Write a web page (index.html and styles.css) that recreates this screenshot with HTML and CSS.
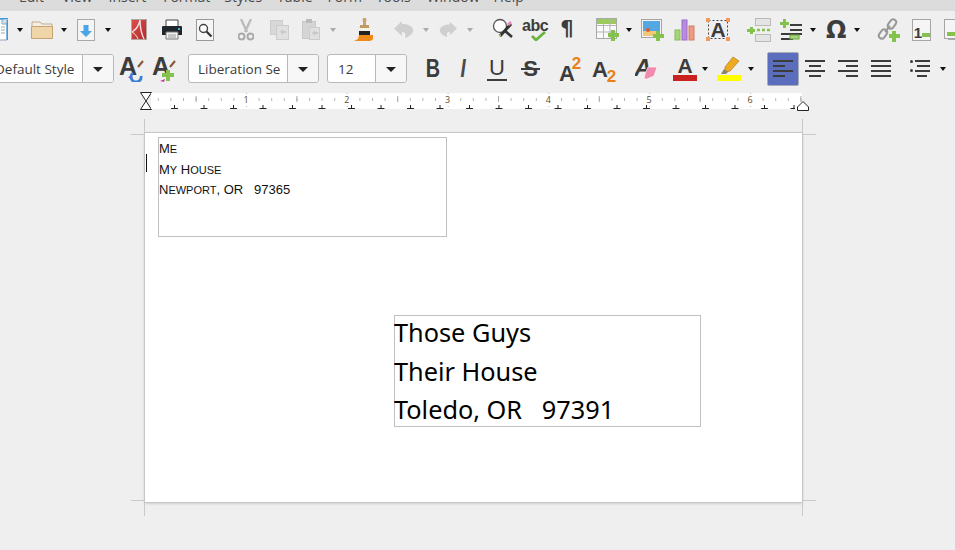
FILE: index.html
```
<!DOCTYPE html>
<html lang="en">
<head>
<meta charset="utf-8">
<title>Envelope - LibreOffice Writer</title>
<link rel="stylesheet" href="styles.css">
</head>
<body>
<div class="app">
  <nav class="menubar">
    <span class="m-edit">Edit</span><span class="m-view">View</span><span class="m-insert">Insert</span><span class="m-format">Format</span><span class="m-styles">Styles</span><span class="m-table">Table</span><span class="m-form">Form</span><span class="m-tools">Tools</span><span class="m-window">Window</span><span class="m-help">Help</span>
  </nav>

  <div class="toolbar row1">
    <svg class="first" width="20" height="23" viewBox="0 0 20 23"><path d="M1 1h13l5 5v16H1z" fill="#fff" stroke="#8fa6bd"/><path d="M14 1v5h5" fill="#d6e6f5" stroke="#8fa6bd"/><path d="M12 0h8v1.500h-8zM18.500 2h1.500v20h-1.500z" fill="#3f9bdc"/><path d="M13 9h4M13 12h4M13 15h4" stroke="#9aa" /></svg>
    <i class="caret g9"></i>
    <svg class="g8" width="22" height="20" viewBox="0 0 22 20"><path d="M1 4V2h8l2 2h10v3H1z" fill="#f3efe6" stroke="#c4ab85"/><path d="M.5 6.500h21v12H.5z" fill="#f0d5a8" stroke="#c4a374"/></svg>
    <i class="caret g8"></i>
    <svg class="g10" width="18" height="22" viewBox="0 0 18 22"><rect x=".5" y=".5" width="17" height="21" fill="#f4f4f4" stroke="#a8a8a8"/><path d="M6.500 6h5v6H15l-6 6-6-6h3.500z" fill="#4aa5e4"/></svg>
    <i class="caret g10"></i>
    <svg class="g20" width="16" height="21" viewBox="0 0 16 21"><defs><linearGradient id="pdf" x1="0" y1="0" x2="1" y2="1"><stop offset="0" stop-color="#d9534f"/><stop offset="1" stop-color="#b5282c"/></linearGradient></defs><rect width="16" height="21" fill="url(#pdf)"/><path d="M9 1c-1 5-3 9-8 12M9 1c0 6 1 13 4 19" fill="none" stroke="#f5dede" stroke-width="1.400"/><path d="M1 13c3 2 5 4 6 7" fill="none" stroke="#eec" stroke-width="1"/><rect x=".5" y=".5" width="15" height="20" fill="none" stroke="#b0a8a0"/></svg>
    <svg class="g15" width="20" height="21" viewBox="0 0 20 21"><path d="M4 1h12v7H4z" fill="#fff" stroke="#444"/><path d="M1 7h18a1 1 0 0 1 1 1v8H0V8a1 1 0 0 1 1-1z" fill="#22272b"/><path d="M4 13h12v7H4z" fill="#f4f4f4" stroke="#777"/><rect x="16" y="9" width="2" height="2" fill="#35b6e6"/><path d="M6 16h8M6 18h8" stroke="#999"/></svg>
    <svg class="g14" width="18" height="22" viewBox="0 0 18 22"><rect x=".5" y=".5" width="17" height="21" fill="#f6f6f6" stroke="#999"/><circle cx="7.500" cy="9.500" r="4" fill="#fff" stroke="#444" stroke-width="1.400"/><path d="M10.500 12.500l5 5" stroke="#333" stroke-width="2.200"/></svg>
    <svg class="g24" width="16" height="22" viewBox="0 0 16 22"><path d="M3 0l6 13M13 0L7 13" stroke="#bbb" stroke-width="2.400" fill="none"/><circle cx="3.500" cy="17.500" r="3" fill="none" stroke="#aaa" stroke-width="2"/><circle cx="12.500" cy="17.500" r="3" fill="none" stroke="#aaa" stroke-width="2"/></svg>
    <svg class="g16" width="19" height="20" viewBox="0 0 19 20"><rect x=".5" y=".5" width="12" height="14" fill="#d8d8d8" stroke="#ccc"/><rect x="6.500" y="5.500" width="12" height="14" fill="#e0e0e0" stroke="#ccc"/><path d="M10 12l3-3v2h3v2h-3v2z" fill="#c8c8c8"/></svg>
    <svg class="g13" width="18" height="21" viewBox="0 0 18 21"><rect x=".5" y="2.500" width="13" height="17" fill="#d5d5d5" stroke="#c8c8c8"/><rect x="4" y="0" width="6" height="4" fill="#bbb"/><rect x="7.500" y="8.500" width="10" height="12" fill="#e0e0e0" stroke="#ccc"/><path d="M10 14l3-3v2h3v2h-3v2z" fill="#c8c8c8"/></svg>
    <i class="caret off g10"></i>
    <svg class="g18" width="20" height="24" viewBox="0 0 20 24"><path d="M9 0h3v9H9z" fill="#c9a36a"/><circle cx="10.500" cy="2" r="2" fill="#c9a36a"/><path d="M6 7h9v2l1 2H5l1-2z" fill="#c09a60"/><rect x="5" y="10" width="11" height="3" fill="#f4f1e5"/><rect x="5" y="13" width="11" height="4" fill="#222"/><path d="M5 17h14v4c-1 2-2 1-3 2H0l4-2z" fill="#ef8a16"/></svg>
    <svg class="g20" width="20" height="19" viewBox="0 0 20 19"><path d="M8 1L0 8.500 8 16v-4c3 0 4 2 3 6 6-2 9-6 8-9-1-3-5-5-11-5z" fill="#cfcfcf"/></svg>
    <i class="caret off g9"></i>
    <svg class="g10" width="18" height="19" viewBox="0 0 20 19"><path d="M12 1l8 7.500L12 16v-4c-3 0-4 2-3 6-6-2-9-6-8-9 1-3 5-5 11-5z" fill="#cfcfcf"/></svg>
    <i class="caret off g10"></i>
    <svg class="g18" width="23" height="24" viewBox="0 0 23 24"><circle cx="9" cy="8" r="6.500" fill="#fff" stroke="#555" stroke-width="1.300"/><path d="M13 12l8 7" stroke="#333" stroke-width="2.500"/><path d="M9 18L20 6" stroke="#333" stroke-width="3"/><path d="M18 8l3-3-2-2-3 3z" fill="#e88cc0"/><path d="M8 20l2-3-1-1z" fill="#e8d96a"/></svg>
    <span class="abc g8"><b>abc</b><svg width="15" height="10" viewBox="0 0 15 10"><path d="M1 5l4 4 9-8" fill="none" stroke="#6cb33f" stroke-width="2.800"/></svg></span>
    <span class="pilcrow g13">¶</span>
    <svg class="g21" width="23" height="23" viewBox="0 0 23 23"><rect x=".5" y=".5" width="20" height="20" fill="#fafafa" stroke="#a8a8a8"/><rect x="1" y="1" width="19" height="5" fill="#9bcb5c"/><path d="M7.500 1v19M14 1v19M1 7.500h19M1 14h19" stroke="#b5b5b5"/><path d="M15 12h4v3h4v4h-4v4h-4v-4h-3v-4h3z" fill="#85c14d"/></svg>
    <i class="caret g7"></i>
    <svg class="g9" width="23" height="22" viewBox="0 0 23 22"><rect x=".5" y=".5" width="20" height="18" fill="#f4f4f4" stroke="#a5a5a5"/><rect x="2" y="2" width="17" height="15" fill="#53a8e2"/><path d="M2 12h17v5H2z" fill="#f0c878"/><circle cx="7" cy="11" r="2" fill="#e35a2e"/><path d="M15 12h4v3h4v4h-4v3h-4v-3h-3v-4h3z" fill="#85c14d"/></svg>
    <svg class="g10" width="22" height="22" viewBox="0 0 22 22"><rect x="1" y="11" width="5" height="10" fill="#a6d67a" stroke="#8ab85e"/><rect x="8" y="1" width="5" height="20" fill="#b88be0" stroke="#9a6cc6"/><rect x="15" y="7" width="5" height="14" fill="#ee9a85" stroke="#cf7e6a"/></svg>
    <svg class="g10" width="24" height="23" viewBox="0 0 24 23"><rect x="2.500" y="2.500" width="19" height="18" fill="none" stroke="#444" stroke-dasharray="2 2"/><rect x="0" y="0" width="4" height="4" fill="#ef9a5a"/><rect x="20" y="0" width="4" height="4" fill="#ef9a5a"/><rect x="0" y="19" width="4" height="4" fill="#ef9a5a"/><rect x="20" y="19" width="4" height="4" fill="#ef9a5a"/><text x="12" y="19" class="svg-a" font-size="21">A</text></svg>
    <svg class="g17" width="24" height="24" viewBox="0 0 24 24"><rect x="8.500" y=".5" width="15" height="7" fill="#e4e4e4" stroke="#bbb"/><rect x="8.500" y="16.500" width="15" height="7" fill="#e4e4e4" stroke="#bbb"/><path d="M10 12h3M15 12h3M20 12h3" stroke="#85c14d" stroke-width="2.500"/><path d="M3 9h3v2h2v3H6v2H3v-2H0v-3h3z" fill="#85c14d"/></svg>
    <svg class="g9" width="22" height="22" viewBox="0 0 22 22"><path d="M10 6h12M10 11h12M1 15h21M1 20h12" stroke="#3c3c3c" stroke-width="2"/><path d="M3 0h3v3h3v3H6v3H3V6H0V3h3z" fill="#85c14d"/><rect x="10" y="16" width="9" height="4" fill="#a6d67a" stroke="#6d9f3e"/></svg>
    <i class="caret g8"></i>
    <span class="omega g10">Ω</span>
    <i class="caret g9"></i>
    <svg class="g17" width="23" height="24" viewBox="0 0 23 24"><rect x="12" y="1" width="6" height="10" rx="3" transform="rotate(35 15 6)" fill="none" stroke="#999" stroke-width="2"/><rect x="3" y="11" width="6" height="10" rx="3" transform="rotate(35 6 16)" fill="none" stroke="#999" stroke-width="2"/><path d="M8 14l5-6" stroke="#999" stroke-width="2"/><path d="M15 13h4v3h4v4h-4v4h-4v-4h-3v-4h3z" fill="#85c14d"/></svg>
    <svg class="g12" width="19" height="22" viewBox="0 0 19 22"><rect x=".5" y=".5" width="18" height="21" fill="#f5f5f5" stroke="#a5a5a5"/><text x="6" y="19" class="svg-a" font-size="15">1</text><rect x="10" y="14" width="8" height="4" fill="#85c14d"/></svg>
    <svg class="g13" width="20" height="22" viewBox="0 0 20 22"><rect x=".5" y=".5" width="19" height="19" fill="#f5f5f5" stroke="#a5a5a5"/><rect x="3" y="13" width="14" height="4" fill="#85c14d"/><path d="M4 20.500h16" stroke="#aaa"/></svg>
  </div>

  <div class="toolbar row2">
    <div class="combo combo-style"><span class="value">Default Style</span><span class="arrow"></span></div>
    <svg class="g5" width="25" height="27" viewBox="0 0 25 27"><text x="9" y="20" class="svg-a" font-size="25">A</text><path d="M9 23l3-3 2 3z" fill="#c23ba0"/><path d="M14 18a5 5 0 1 0 8 3" fill="none" stroke="#3b7fd6" stroke-width="2.800"/><path d="M24 6l-5 6" stroke="#86553a" stroke-width="2"/></svg>
    <svg class="g8" width="24" height="27" viewBox="0 0 24 27"><text x="9" y="20" class="svg-a" font-size="25">A</text><path d="M8 26l5-2-1 3z" fill="#c23ba0"/><path d="M14 15h4v3h4v4h-4v4h-4v-4h-4v-4h4z" fill="#85c14d"/><path d="M23 6l-5 6" stroke="#86553a" stroke-width="2"/></svg>
    <div class="combo combo-font g12"><span class="value">Liberation Se</span><span class="arrow"></span></div>
    <div class="combo combo-size g8"><span class="value">12</span><span class="arrow"></span></div>
    <span class="fmt b g18">B</span>
    <span class="fmt i g19">I</span>
    <span class="fmt u g19">U</span>
    <span class="fmt s g14">S</span>
    <svg class="g19" width="22" height="26" viewBox="0 0 22 26"><text x="8" y="25" class="svg-a" font-size="22">A</text><text x="17.500" y="13" class="svg-o" font-size="17">2</text></svg>
    <svg class="g11" width="24" height="26" viewBox="0 0 24 26"><text x="8" y="21" class="svg-a" font-size="22">A</text><text x="19.500" y="26" class="svg-o" font-size="17">2</text></svg>
    <svg class="g19" width="22" height="24" viewBox="0 0 22 24"><text x="8" y="19" class="svg-a svg-it" font-size="24">A</text><path d="M10 17l3-7h9l-3 9-7 3h-3z" fill="#f28ab0" stroke="#fff" stroke-width=".6"/></svg>
    <svg class="g16" width="24" height="25" viewBox="0 0 24 25"><text x="12" y="17" class="svg-a" font-size="21">A</text><rect y="19" width="24" height="6" fill="#c9211e"/></svg>
    <i class="caret g5"></i>
    <svg class="g9" width="24" height="25" viewBox="0 0 24 25"><rect y="19" width="24" height="6" fill="#ffff00"/><path d="M8 11L16 1l6 4-9 10-5 1z" fill="#eeaa22" stroke="#b98320" stroke-width=".8"/><path d="M4 18l3-5 4 3-2 2z" fill="#8c8466"/></svg>
    <i class="caret g7"></i>
    <div class="align-active g13"><svg width="20" height="18" viewBox="0 0 20 18"><path d="M0 1h20M0 6h12M0 11h20M0 16h12" stroke="#3c3c3c" stroke-width="2"/></svg></div>
    <svg class="g6" width="20" height="18" viewBox="0 0 20 18"><path d="M0 1h20M4 6h12M0 11h20M4 16h12" stroke="#3c3c3c" stroke-width="2"/></svg>
    <svg class="g13" width="20" height="18" viewBox="0 0 20 18"><path d="M0 1h20M8 6h12M0 11h20M8 16h12" stroke="#3c3c3c" stroke-width="2"/></svg>
    <svg class="g13" width="20" height="18" viewBox="0 0 20 18"><path d="M0 1h20M0 6h20M0 11h20M0 16h20" stroke="#3c3c3c" stroke-width="2"/></svg>
    <svg class="g19" width="20" height="18" viewBox="0 0 20 18"><path d="M5 1h15M7 6h13M5 11h15M7 16h10" stroke="#3c3c3c" stroke-width="2"/><circle cx="1.500" cy="1.500" r="1.500" fill="#3c3c3c"/><circle cx="1.500" cy="10.500" r="1.500" fill="#3c3c3c"/></svg>
    <i class="caret g10"></i>
  </div>

  <main class="workspace">
    <div class="ruler">
      <svg class="hourglass" width="12" height="18" viewBox="0 0 12 18"><path d="M.5.500h11L.5 17.500h11z" fill="#fff" stroke="#222"/></svg>
      <div class="ruler-strip">
        <svg class="ticks" width="651" height="16" viewBox="151 93 651 16">
          <defs>
            <pattern id="small" patternUnits="userSpaceOnUse" x="145.200" y="93" width="12.600" height="16"><rect x="0" y="5" width="1" height="3" fill="#b5b5b5"/></pattern>
            <pattern id="long" patternUnits="userSpaceOnUse" x="195.600" y="93" width="100.800" height="16"><rect x="0" y="3" width="1" height="6" fill="#aaa"/></pattern>
            <pattern id="inch" patternUnits="userSpaceOnUse" x="145.200" y="93" width="100.800" height="16"><rect x="0" y="0" width="1" height="1" fill="#bbb"/><rect x="0" y="13" width="1" height="1" fill="#bbb"/></pattern>
            <pattern id="foot" patternUnits="userSpaceOnUse" x="174" y="93" width="29.500" height="16"><rect x="0" y="12" width="1" height="3" fill="#222"/><rect x="-3" y="15" width="7" height="1" fill="#222"/><rect x="26.500" y="15" width="3" height="1" fill="#222"/></pattern>
          </defs>
          <rect x="151" y="93" width="651" height="16" fill="url(#small)"/>
          <rect x="151" y="93" width="651" height="16" fill="url(#long)"/>
          <rect x="151" y="93" width="651" height="16" fill="url(#inch)"/>
          <rect x="170" y="93" width="625" height="16" fill="url(#foot)"/>
        </svg>
        <div class="ruler-nums"><span>1</span><span>2</span><span>3</span><span>4</span><span>5</span><span>6</span></div>
      </div>
      <svg class="tab-right" width="12" height="10" viewBox="0 0 12 10"><path d="M6 .5L11.500 6v3.500H.5V6z" fill="#fff" stroke="#222"/></svg>
    </div>

    <div class="page">
      <i class="crop tl-h"></i><i class="crop tl-v"></i>
      <i class="crop tr-h"></i><i class="crop tr-v"></i>
      <i class="crop bl-h"></i><i class="crop bl-v"></i>
      <i class="crop br-h"></i><i class="crop br-v"></i>
      <i class="cursor"></i>
      <div class="frame sender">
        <p>M<span class="sc">e</span></p>
        <p>M<span class="sc">y</span> H<span class="sc">ouse</span></p>
        <p>N<span class="sc">ewport</span>, OR   97365</p>
      </div>
      <div class="frame addressee">
        <p>Those Guys</p>
        <p>Their House</p>
        <p>Toledo, OR   97391</p>
      </div>
    </div>
  </main>
</div>
</body>
</html>
```
FILE: styles.css
```
* { box-sizing: border-box; }
html, body { margin: 0; height: 100%; }
body { background: #efefef; overflow: hidden; font-family: "Liberation Sans", Arial, sans-serif; }
.app { width: 955px; height: 550px; overflow: hidden; display: flex; flex-direction: column; }

.menubar { height: 11px; flex: none; background: #dcdcdc; position: relative; overflow: hidden; font: 14px/14px "Open Sans", sans-serif; color: #4a4a4a; display: flex; align-items: flex-end; }
.menubar span { height: 14px; margin-bottom: 7px; }
.m-edit { margin-left: 19px; }
.m-view { margin-left: 18px; }
.m-insert { margin-left: 16px; }
.m-format { margin-left: 17px; }
.m-styles { margin-left: 14px; }
.m-table { margin-left: 15px; }
.m-form { margin-left: 15px; }
.m-tools { margin-left: 14px; }
.m-window { margin-left: 16px; }
.m-help { margin-left: 14px; }

.toolbar { display: flex; align-items: center; flex: none; width: 955px; overflow: hidden; }
.toolbar > * { flex: none; }
.row1 { height: 37px; }
.row2 { height: 41px; }
.first { margin-left: -12px; }
.g5 { margin-left: 5px; } .g6 { margin-left: 6px; } .g7 { margin-left: 7px; } .g8 { margin-left: 8px; }
.g9 { margin-left: 9px; } .g10 { margin-left: 10px; } .g11 { margin-left: 11px; } .g12 { margin-left: 12px; }
.g13 { margin-left: 13px; } .g14 { margin-left: 14px; } .g15 { margin-left: 15px; } .g16 { margin-left: 16px; }
.g17 { margin-left: 17px; } .g18 { margin-left: 18px; } .g19 { margin-left: 19px; } .g20 { margin-left: 20px; }
.g21 { margin-left: 21px; } .g24 { margin-left: 24px; }

.caret { display: block; width: 6px; height: 4px; border-left: 3px solid transparent; border-right: 3px solid transparent; border-top: 4px solid #111; }
.caret.off { border-top-color: #aaa; }

.abc { width: 24px; height: 24px; position: relative; display: block; font: 700 16px/16px "Liberation Sans", sans-serif; color: #3c3c3c; letter-spacing: -.4px; }
.abc b { display: block; }
.abc svg { position: absolute; right: 0; bottom: 1px; }
.pilcrow { width: 16px; height: 24px; margin-top: -2px; text-align: center; font: 700 21px/24px "DejaVu Sans", sans-serif; color: #3c3c3c; }
.omega { width: 19px; text-align: center; font: 700 24px/24px "DejaVu Sans", sans-serif; color: #3c3c3c; }

.svg-a { font-family: "Liberation Sans", sans-serif; font-weight: 700; fill: #3c3c3c; text-anchor: middle; }
.svg-it { font-style: italic; }
.svg-o { font-family: "Liberation Sans", sans-serif; font-weight: 700; fill: #e8811a; text-anchor: middle; }

.combo { height: 29px; display: flex; background: #fff; border: 1px solid #b9b9b9; border-radius: 3px; font: 13.500px/29px "Open Sans", sans-serif; color: #3c3c3c; overflow: hidden; }
.combo .value { flex: 1; padding-left: 9px; overflow: hidden; white-space: nowrap; }
.combo .arrow { width: 31px; flex: none; background: #f7f7f7; border-left: 1px solid #b9b9b9; position: relative; }
.combo .arrow::after { content: ""; position: absolute; left: 10px; top: 12px; border-left: 5px solid transparent; border-right: 5px solid transparent; border-top: 5px solid #222; }
.combo-style { width: 124px; margin-left: -10px; }
.combo-style .value { padding-left: 4px; }
.combo-font { width: 131px; }
.combo-size { width: 80px; }
.combo-size .value { padding-left: 10px; }

.fmt { display: block; font: 700 22px/24px "Liberation Sans", sans-serif; color: #3c3c3c; text-align: center; }
.b { width: 14px; transform: scale(.9, 1.15); }
.i { width: 10px; font-style: italic; transform: scale(.85, 1.15); color: #4a4a4a; }
.u { width: 20px; font-weight: 400; border-bottom: 2px solid #3c3c3c; height: 25px; font-size: 22px; }
.s { width: 19px; position: relative; font-size: 22px; }
.s::after { content: ""; position: absolute; left: 0; right: 0; top: 11px; height: 2px; background: #3c3c3c; }

.align-active { width: 32px; height: 34px; margin-top: 1px; display: flex; align-items: center; justify-content: center; background: #5a6ebd; border: 1px solid #a8acb8; border-radius: 2px; }

.workspace { flex: 1; position: relative; padding-top: 4px; }
.ruler { display: flex; height: 18px; margin-left: 140px; width: 674px; }
.hourglass { flex: none; margin-top: -1px; }
.ruler-strip { position: relative; width: 651px; height: 16px; background: #fff; flex: none; margin-left: -1px; }
.ticks { display: block; }
.ruler-nums { position: absolute; left: 0; top: 0; width: 100%; height: 100%; display: grid; grid-template-columns: repeat(6, 100.8px); padding-left: 90px; font: 9px/10px "Open Sans", sans-serif; color: #5c4a2a; }
.ruler-nums span { text-align: center; width: 10px; background: #fff; height: 10px; margin-top: 2px; }
.tab-right { flex: none; margin: 8px 0 0 -5px; position: relative; }

.page { position: relative; width: 657px; height: 369px; margin: 22px 0 0 145px; background: #fff; box-shadow: 0 0 0 1px #c6c6c6, 0 1px 3px #b8b8b8; }
.crop { position: absolute; background: #c9c9c9; display: block; }
.tl-h, .tr-h, .bl-h, .br-h { width: 13px; height: 1px; }
.tl-v, .tr-v, .bl-v, .br-v { width: 1px; height: 13px; }
.tl-h { left: -14px; top: 1px; } .tl-v { left: -1px; top: -14px; }
.tr-h { right: -14px; top: 1px; } .tr-v { right: -1px; top: -14px; }
.bl-h { left: -14px; bottom: 1px; } .bl-v { left: -1px; bottom: -14px; }
.br-h { right: -14px; bottom: 1px; } .br-v { right: -1px; bottom: -14px; }
.cursor { position: absolute; left: 1px; top: 21px; width: 1px; height: 18px; background: #111; }

.frame { position: absolute; border: 1px solid #c0c0c0; color: #111; }
.frame p { margin: 0; white-space: pre; }
.sender { left: 13px; top: 4px; width: 289px; height: 100px; padding-top: 1px; font: 13px/20.500px "Liberation Sans", sans-serif; }
.sc { text-transform: uppercase; font-size: 11px; }
.addressee { left: 249px; top: 182px; width: 307px; height: 112px; font: 25.300px/38.500px "Noto Sans", sans-serif; color: #000; }
.addressee p { margin-left: -1px; }
.addressee p:first-child { margin-top: -3px; }
```
